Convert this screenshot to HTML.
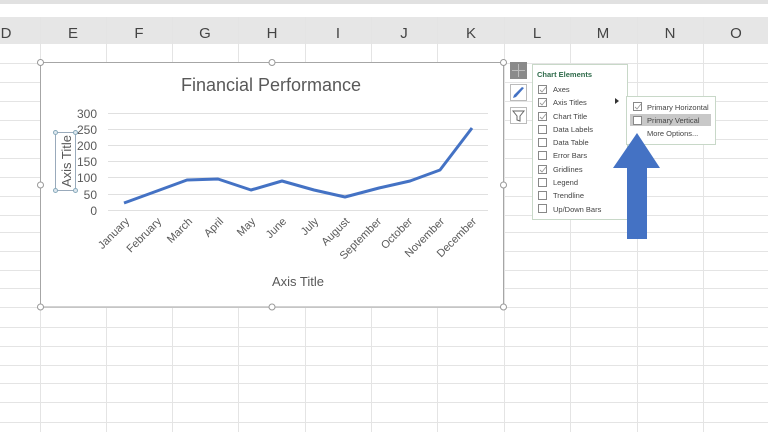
<!DOCTYPE html>
<html><head><style>
body{margin:0;width:768px;height:432px;overflow:hidden;background:#fff;font-family:"Liberation Sans",sans-serif;position:relative}
.a{position:absolute}
</style></head><body>
<svg class="a" style="left:0;top:0" width="768" height="432">
<rect x="0" y="0" width="768" height="4" fill="#e1e1e1"/>
<rect x="0" y="17" width="768" height="27" fill="#e6e6e6"/>
<g stroke="#e4e4e4" stroke-width="1">
<line x1="0" y1="63.5" x2="768" y2="63.5"/><line x1="0" y1="82.5" x2="768" y2="82.5"/><line x1="0" y1="101.5" x2="768" y2="101.5"/><line x1="0" y1="120.5" x2="768" y2="120.5"/><line x1="0" y1="139.5" x2="768" y2="139.5"/><line x1="0" y1="158.5" x2="768" y2="158.5"/><line x1="0" y1="177.5" x2="768" y2="177.5"/><line x1="0" y1="196.5" x2="768" y2="196.5"/><line x1="0" y1="215.5" x2="768" y2="215.5"/><line x1="0" y1="232.5" x2="768" y2="232.5"/><line x1="0" y1="251.5" x2="768" y2="251.5"/><line x1="0" y1="270.5" x2="768" y2="270.5"/><line x1="0" y1="288.5" x2="768" y2="288.5"/><line x1="0" y1="307.5" x2="768" y2="307.5"/><line x1="0" y1="327.5" x2="768" y2="327.5"/><line x1="0" y1="346.5" x2="768" y2="346.5"/><line x1="0" y1="365.5" x2="768" y2="365.5"/><line x1="0" y1="383.5" x2="768" y2="383.5"/><line x1="0" y1="402.5" x2="768" y2="402.5"/><line x1="0" y1="422.5" x2="768" y2="422.5"/>
<line x1="40.5" y1="17" x2="40.5" y2="432"/><line x1="106.5" y1="17" x2="106.5" y2="432"/><line x1="172.5" y1="17" x2="172.5" y2="432"/><line x1="238.5" y1="17" x2="238.5" y2="432"/><line x1="305.5" y1="17" x2="305.5" y2="432"/><line x1="371.5" y1="17" x2="371.5" y2="432"/><line x1="437.5" y1="17" x2="437.5" y2="432"/><line x1="504.5" y1="17" x2="504.5" y2="432"/><line x1="570.5" y1="17" x2="570.5" y2="432"/><line x1="637.5" y1="17" x2="637.5" y2="432"/><line x1="703.5" y1="17" x2="703.5" y2="432"/>
</g>
<g font-size="15" fill="#444" text-anchor="middle">
<text x="6" y="38">D</text><text x="73" y="38">E</text><text x="139" y="38">F</text><text x="205" y="38">G</text><text x="272" y="38">H</text><text x="338" y="38">I</text><text x="404" y="38">J</text><text x="471" y="38">K</text><text x="537" y="38">L</text><text x="603" y="38">M</text><text x="670" y="38">N</text><text x="736" y="38">O</text>
</g>
<rect x="40.5" y="62.5" width="463" height="244.5" fill="#fff" stroke="#a6a6a6"/>
<g fill="#fff" stroke="#999"><circle cx="40.5" cy="62.5" r="3"/><circle cx="272" cy="62.5" r="3"/><circle cx="503.5" cy="62.5" r="3"/><circle cx="40.5" cy="185" r="3"/><circle cx="503.5" cy="185" r="3"/><circle cx="40.5" cy="307" r="3"/><circle cx="272" cy="307" r="3"/><circle cx="503.5" cy="307" r="3"/></g>
<text x="271" y="91" font-size="18" fill="#595959" text-anchor="middle">Financial Performance</text>
<g stroke="#e0e0e0"><line x1="108" y1="113.5" x2="488" y2="113.5"/><line x1="108" y1="129.5" x2="488" y2="129.5"/><line x1="108" y1="145.5" x2="488" y2="145.5"/><line x1="108" y1="161.5" x2="488" y2="161.5"/><line x1="108" y1="177.5" x2="488" y2="177.5"/><line x1="108" y1="194.5" x2="488" y2="194.5"/><line x1="108" y1="210.5" x2="488" y2="210.5"/></g>
<g font-size="12" fill="#595959" text-anchor="end"><text x="97" y="118">300</text><text x="97" y="134">250</text><text x="97" y="150">200</text><text x="97" y="166">150</text><text x="97" y="182">100</text><text x="97" y="199">50</text><text x="97" y="215">0</text></g>
<rect x="55.5" y="132.5" width="20" height="58" fill="none" stroke="#9ab"/>
<g fill="#dfe8f0" stroke="#8ab"><circle cx="55.5" cy="132.5" r="2"/><circle cx="75.5" cy="132.5" r="2"/><circle cx="55.5" cy="190.5" r="2"/><circle cx="75.5" cy="190.5" r="2"/></g>
<text transform="translate(71,161) rotate(-90)" font-size="13" fill="#595959" text-anchor="middle">Axis Title</text>
<polyline points="124,203 157,191 187,180 218,179 251,190 282,181 314,190 345,197 379,188 410,181 440,170 472,128" fill="none" stroke="#4472c4" stroke-width="3" stroke-linejoin="round"/>
<g font-size="11" fill="#595959" text-anchor="end">
<text transform="translate(130,222) rotate(-45)">January</text><text transform="translate(162,222) rotate(-45)">February</text><text transform="translate(193,222) rotate(-45)">March</text><text transform="translate(224,222) rotate(-45)">April</text><text transform="translate(256,222) rotate(-45)">May</text><text transform="translate(287,222) rotate(-45)">June</text><text transform="translate(319,222) rotate(-45)">July</text><text transform="translate(350,222) rotate(-45)">August</text><text transform="translate(382,222) rotate(-45)">September</text><text transform="translate(413,222) rotate(-45)">October</text><text transform="translate(445,222) rotate(-45)">November</text><text transform="translate(477,222) rotate(-45)">December</text>
</g>
<text x="298" y="286" font-size="13" fill="#595959" text-anchor="middle">Axis Title</text>
<rect x="510" y="62" width="17" height="17" fill="#8a8a8a"/>
<path d="M518.5 64v13M512 70.5h13" stroke="#bbb" stroke-width="1"/>
<rect x="510.5" y="84.5" width="16" height="16" fill="#fff" stroke="#bbb"/>
<path d="M513 98l3-1 8-9-2-1-8 8z" fill="#4472c4"/>
<rect x="510.5" y="107.5" width="16" height="16" fill="#fff" stroke="#bbb"/>
<path d="M513 111h11l-4 5v5l-3-1v-4z" fill="none" stroke="#666"/>
<rect x="532.5" y="64.5" width="95" height="155" fill="#fff" stroke="#c8d8c8"/>
<path d="M527 70l5-4v8z" fill="#fff"/>
<text x="537" y="77" font-size="7.5" font-weight="bold" fill="#2e6b4a">Chart Elements</text>
<g font-size="7.5" fill="#444">
<text x="553" y="92">Axes</text><text x="553" y="105">Axis Titles</text><text x="553" y="119">Chart Title</text><text x="553" y="132">Data Labels</text><text x="553" y="145">Data Table</text><text x="553" y="158">Error Bars</text><text x="553" y="172">Gridlines</text><text x="553" y="185">Legend</text><text x="553" y="198">Trendline</text><text x="553" y="212">Up/Down Bars</text>
</g>
<g fill="#fff" stroke="#888"><rect x="538.5" y="85.5" width="8" height="8"/><rect x="538.5" y="98.5" width="8" height="8"/><rect x="538.5" y="112.5" width="8" height="8"/><rect x="538.5" y="125.5" width="8" height="8"/><rect x="538.5" y="138.5" width="8" height="8"/><rect x="538.5" y="151.5" width="8" height="8"/><rect x="538.5" y="165.5" width="8" height="8"/><rect x="538.5" y="178.5" width="8" height="8"/><rect x="538.5" y="191.5" width="8" height="8"/><rect x="538.5" y="204.5" width="8" height="8"/></g>
<g fill="none" stroke="#999" stroke-width="0.9"><path d="M540 90l2 2 4-5"/><path d="M540 103l2 2 4-5"/><path d="M540 117l2 2 4-5"/><path d="M540 170l2 2 4-5"/></g>
<path d="M615 98l4 3-4 3z" fill="#333"/>
<rect x="626.5" y="96.5" width="89" height="48" fill="#fff" stroke="#c8d8c8"/>
<rect x="630" y="114" width="81" height="12" fill="#c8c8c8"/>
<text x="647" y="110" font-size="7.5" fill="#444">Primary Horizontal</text>
<text x="647" y="123" font-size="7.5" fill="#444">Primary Vertical</text>
<text x="647" y="136" font-size="7.5" fill="#444">More Options...</text>
<rect x="633.5" y="102.5" width="8" height="8" fill="#fff" stroke="#888"/><path d="M635 107l2 2 4-5" fill="none" stroke="#999" stroke-width="0.9"/>
<rect x="633.5" y="116.5" width="8" height="8" fill="#fff" stroke="#888"/>
<path d="M627 239V168h-14l24-35 23 35h-13v71z" fill="#4472c4"/>
</svg>
</body></html>
